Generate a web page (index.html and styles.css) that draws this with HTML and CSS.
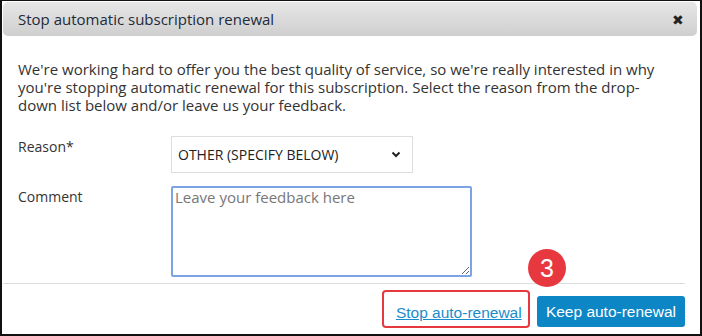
FILE: index.html
```html
<!DOCTYPE html>
<html lang="en">
<head>
  <meta charset="UTF-8" />
  <title>Stop automatic subscription renewal</title>
  <link rel="stylesheet" href="styles.css">
</head>
<body>

  <div class="frame">
    <div class="dialog">
      <div class="dialog-header">
        <span class="dialog-title">Stop automatic subscription renewal</span>
        <span class="close">&#10006;</span>
      </div>

      <div class="dialog-body">
        <p>We're working hard to offer you the best quality of service, so we're really interested in why you're stopping automatic renewal for this subscription. Select the reason from the drop-down list below and/or leave us your feedback.</p>

        <div class="field field-reason">
          <label for="reason">Reason*</label>
          <div class="select" id="reason">
            <span>OTHER (SPECIFY BELOW)</span>
            <svg width="10" height="7" viewBox="0 0 10 7"><path d="M1.5 1.5 L5 5 L8.5 1.5" fill="none" stroke="#222" stroke-width="2"/></svg>
          </div>
        </div>

        <div class="field">
          <label for="comment">Comment</label>
          <textarea id="comment" placeholder="Leave your feedback here"></textarea>
        </div>
      </div>

      <div class="dialog-footer">
        <div class="stop-wrap">
          <a href="#" class="link-stop">Stop auto-renewal</a>
          <span class="badge">3</span>
        </div>
        <button type="button" class="btn-blue">Keep auto-renewal</button>
      </div>
    </div>
  </div>

</body>
</html>
```

FILE: styles.css
```css
body {
  margin: 0;
  font-family: "Open Sans", Arial, sans-serif;
  background-color: white;
}
.frame {
  width: 702px;
  height: 336px;
  box-sizing: border-box;
  border: 2px solid #111;
  border-top-width: 1px;
  padding: 1px 3px 0 1px;
  overflow: hidden;
}
.dialog {
  background-color: white;
}
.dialog-header {
  height: 34px;
  display: flex;
  align-items: center;
  justify-content: space-between;
  padding: 0 13px 0 15px;
  background: linear-gradient(#e6e6e6, #cfcfcf);
  border-radius: 5px;
}
.dialog-title {
  font-size: 15px;
  color: #1c2b3a;
}
.close {
  font-size: 14px;
  color: #222;
}
.dialog-body {
  padding: 24px 15px 0 15px;
}
p {
  max-width: 650px;
  margin: 0 0 22px 0;
  font-size: 15px;
  line-height: 18px;
  color: #333;
}
.field {
  display: flex;
  align-items: flex-start;
}
.field-reason {
  margin-bottom: 13px;
}
label {
  width: 153px;
  padding-top: 1px;
  font-size: 14px;
  color: #333;
}
.select {
  width: 242px;
  height: 37px;
  box-sizing: border-box;
  border: 1px solid #ddd;
  display: flex;
  align-items: center;
  justify-content: space-between;
  padding: 0 11px 0 6px;
  font-size: 14px;
  color: #222;
}
textarea {
  width: 301px;
  height: 91px;
  box-sizing: border-box;
  margin: 0;
  border: 2px solid #7ba3e6;
  border-radius: 2px;
  padding: 0 2px;
  font-family: "Open Sans", Arial, sans-serif;
  font-size: 15px;
  line-height: 18px;
  resize: vertical;
}
textarea::placeholder {
  color: #777;
}
.dialog-footer {
  margin: 6px 12px 0 0;
  border-top: 1px solid #ddd;
  display: flex;
  justify-content: flex-end;
  align-items: flex-end;
  gap: 7px;
  padding-top: 6px;
}
.stop-wrap {
  position: relative;
}
.link-stop {
  display: block;
  box-sizing: border-box;
  width: 148px;
  height: 38px;
  border: 2px solid #e8383f;
  border-radius: 4px;
  padding: 12px 0 0 12px;
  font-family: "Liberation Sans", Arial, sans-serif;
  font-size: 15.5px;
  color: #1a8ccc;
}
.badge {
  position: absolute;
  left: 146px;
  top: -41px;
  width: 38px;
  height: 38px;
  border-radius: 50%;
  background-color: #e8383f;
  color: white;
  font-family: "Liberation Sans", Arial, sans-serif;
  font-size: 25px;
  display: flex;
  align-items: center;
  justify-content: center;
}
.btn-blue {
  background-color: #0d86c6;
  color: white;
  height: 31px;
  margin-bottom: 1px;
  padding: 0 9px;
  border: none;
  border-radius: 3px;
  font-family: "Liberation Sans", Arial, sans-serif;
  font-size: 15.5px;
}
```
